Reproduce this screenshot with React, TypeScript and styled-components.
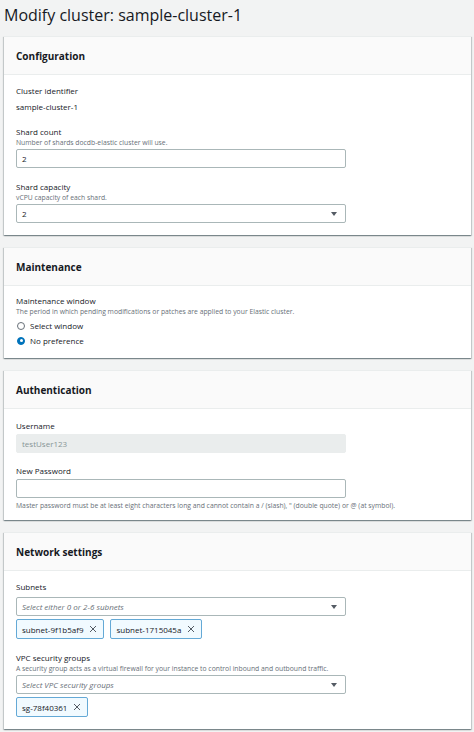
import React from "react";
import styled, { createGlobalStyle } from "styled-components";

const Global = createGlobalStyle`
  html, body { margin: 0; padding: 0; background: #f2f3f3; }
  body { font-family: "Open Sans", "Noto Sans", sans-serif; color: #16191f; }
  * { box-sizing: border-box; }
`;

const Page = styled.div`
  padding: 3px 3px 4px 4px;
  display: flex;
  flex-direction: column;
`;

const Title = styled.h1`
  margin: 0 0 9px 0;
  font-size: 16px;
  line-height: 24px;
  font-weight: 400;
  color: #16191f;
`;

const Panels = styled.div`
  display: flex;
  flex-direction: column;
  gap: 12px;
`;

const Panel = styled.section`
  background: #fff;
  border-top: 1px solid #eaeded;
  box-shadow: 0 1px 1px 0 rgba(0, 28, 36, 0.3), 1px 1px 1px 0 rgba(0, 28, 36, 0.15),
    -1px 1px 1px 0 rgba(0, 28, 36, 0.15);
`;

const PanelHeader = styled.header`
  height: 38px;
  display: flex;
  align-items: center;
  padding: 0 12px;
  background: #fafafa;
  border-bottom: 1px solid #eaeded;
  font-size: 10px;
  font-weight: 700;
  color: #16191f;
`;

const PanelBody = styled.div<{ $pt: number; $pb: number; $gap: number }>`
  display: flex;
  flex-direction: column;
  gap: ${(p) => p.$gap}px;
  padding: ${(p) => p.$pt}px 12px ${(p) => p.$pb}px 12px;
`;

const Field = styled.div`
  display: flex;
  flex-direction: column;
`;

const Label = styled.div`
  font-size: 8px;
  line-height: 12px;
  color: #16191f;
`;

const Value = styled.div`
  font-size: 8px;
  line-height: 12px;
  margin-top: 4px;
  color: #16191f;
`;

const Desc = styled.div`
  font-size: 6.8px;
  line-height: 10px;
  color: #687078;
`;

const Hint = styled.div`
  font-size: 6.8px;
  line-height: 10px;
  margin-top: 3px;
  color: #687078;
`;

const Input = styled.div<{ $disabled?: boolean; $gap?: number }>`
  width: 330px;
  height: 19px;
  margin-top: ${(p) => p.$gap ?? 0}px;
  display: flex;
  align-items: center;
  padding: 0 5px;
  border: 1px solid ${(p) => (p.$disabled ? "#eaeded" : "#aab7b8")};
  border-radius: 2px;
  background: ${(p) => (p.$disabled ? "#eaeded" : "#fff")};
  color: ${(p) => (p.$disabled ? "#879596" : "#16191f")};
  font-size: 8px;
`;

const SelectBox = styled(Input)`
  justify-content: space-between;
  padding-right: 8px;
`;

const Placeholder = styled.span`
  font-style: italic;
  color: #687078;
`;

const Caret = styled.span`
  width: 0;
  height: 0;
  border-left: 3px solid transparent;
  border-right: 3px solid transparent;
  border-top: 4px solid #545b64;
`;

const Radios = styled.div`
  display: flex;
  flex-direction: column;
  margin-top: 1px;
`;

const RadioRow = styled.div`
  display: flex;
  align-items: center;
  gap: 5px;
  height: 15px;
  padding-left: 1px;
  font-size: 8px;
  color: #16191f;
`;

const RadioDot = styled.span<{ $checked?: boolean }>`
  width: 8px;
  height: 8px;
  border-radius: 50%;
  background: ${(p) => (p.$checked ? "#0073bb" : "#fff")};
  border: 1px solid ${(p) => (p.$checked ? "#0073bb" : "#687078")};
  display: flex;
  align-items: center;
  justify-content: center;
  &::after {
    content: "";
    width: 3px;
    height: 3px;
    border-radius: 50%;
    background: #fff;
    display: ${(p) => (p.$checked ? "block" : "none")};
  }
`;

const Tokens = styled.div`
  display: flex;
  gap: 6px;
  margin-top: 3px;
`;

const Token = styled.div`
  height: 20px;
  display: flex;
  align-items: center;
  gap: 6px;
  padding: 0 6px 0 5px;
  border: 1px solid #64a9d6;
  border-radius: 2px;
  background: #f1faff;
  font-size: 8px;
  color: #16191f;
`;

const Close = () => (
  <svg width="8" height="8" viewBox="0 0 8 8">
    <path d="M1 1 L7 7 M7 1 L1 7" stroke="#545b64" strokeWidth="1" fill="none" />
  </svg>
);

export default function App() {
  return (
    <>
      <Global />
      <Page>
        <Title>Modify cluster: sample-cluster-1</Title>
        <Panels>
          <Panel>
            <PanelHeader>Configuration</PanelHeader>
            <PanelBody $pt={10} $pb={12} $gap={13}>
              <Field>
                <Label>Cluster identifier</Label>
                <Value>sample-cluster-1</Value>
              </Field>
              <Field>
                <Label>Shard count</Label>
                <Desc>Number of shards docdb-elastic cluster will use.</Desc>
                <Input $gap={1}>2</Input>
              </Field>
              <Field>
                <Label>Shard capacity</Label>
                <Desc>vCPU capacity of each shard.</Desc>
                <SelectBox $gap={1}>
                  <span>2</span>
                  <Caret />
                </SelectBox>
              </Field>
            </PanelBody>
          </Panel>

          <Panel>
            <PanelHeader>Maintenance</PanelHeader>
            <PanelBody $pt={9} $pb={10} $gap={13}>
              <Field>
                <Label>Maintenance window</Label>
                <Desc>The period in which pending modifications or patches are applied to your Elastic cluster.</Desc>
                <Radios>
                  <RadioRow>
                    <RadioDot />
                    Select window
                  </RadioRow>
                  <RadioRow>
                    <RadioDot $checked />
                    No preference
                  </RadioRow>
                </Radios>
              </Field>
            </PanelBody>
          </Panel>

          <Panel>
            <PanelHeader>Authentication</PanelHeader>
            <PanelBody $pt={11} $pb={9} $gap={12}>
              <Field>
                <Label>Username</Label>
                <Input $disabled $gap={2}>testUser123</Input>
              </Field>
              <Field>
                <Label>New Password</Label>
                <Input $gap={2} />
                <Hint>
                  Master password must be at least eight characters long and cannot contain a / (slash), " (double quote) or @ (at symbol).
                </Hint>
              </Field>
            </PanelBody>
          </Panel>

          <Panel>
            <PanelHeader>Network settings</PanelHeader>
            <PanelBody $pt={10} $pb={12} $gap={13}>
              <Field>
                <Label>Subnets</Label>
                <SelectBox $gap={4}>
                  <Placeholder>Select either 0 or 2-6 subnets</Placeholder>
                  <Caret />
                </SelectBox>
                <Tokens>
                  <Token>
                    subnet-9f1b5af9
                    <Close />
                  </Token>
                  <Token>
                    subnet-1715045a
                    <Close />
                  </Token>
                </Tokens>
              </Field>
              <Field>
                <Label>VPC security groups</Label>
                <Desc>A security group acts as a virtual firewall for your instance to control inbound and outbound traffic.</Desc>
                <SelectBox $gap={1}>
                  <Placeholder>Select VPC security groups</Placeholder>
                  <Caret />
                </SelectBox>
                <Tokens>
                  <Token>
                    sg-78f40361
                    <Close />
                  </Token>
                </Tokens>
              </Field>
            </PanelBody>
          </Panel>
        </Panels>
      </Page>
    </>
  );
}
